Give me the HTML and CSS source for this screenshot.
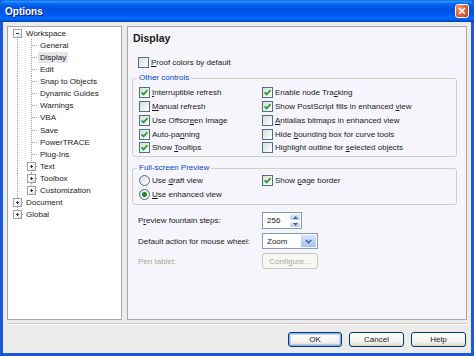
FILE: index.html
```html
<!DOCTYPE html>
<html>
  <head>
    <title>Options</title>
    <link rel="stylesheet" href="styles.css">
  </head>
  <body>
    <div class="window">
      <div class="titlebar">
        <span class="title">Options</span>
        <span class="close">
          <svg width="8" height="8" viewBox="0 0 8 8"><path d="M1 1L7 7M7 1L1 7" stroke="#fff" stroke-width="1.6"/></svg>
        </span>
      </div>

      <div class="client">
        <div class="panes">
          <!-- category tree -->
          <div class="tree">
            <div class="node"><span class="g down"><span class="box"></span></span><span class="label">Workspace</span></div>
            <div class="node"><span class="g v"></span><span class="g tee"></span><span class="label">General</span></div>
            <div class="node"><span class="g v"></span><span class="g tee"></span><span class="label sel">Display</span></div>
            <div class="node"><span class="g v"></span><span class="g tee"></span><span class="label">Edit</span></div>
            <div class="node"><span class="g v"></span><span class="g tee"></span><span class="label">Snap to Objects</span></div>
            <div class="node"><span class="g v"></span><span class="g tee"></span><span class="label">Dynamic Guides</span></div>
            <div class="node"><span class="g v"></span><span class="g tee"></span><span class="label">Warnings</span></div>
            <div class="node"><span class="g v"></span><span class="g tee"></span><span class="label">VBA</span></div>
            <div class="node"><span class="g v"></span><span class="g tee"></span><span class="label">Save</span></div>
            <div class="node"><span class="g v"></span><span class="g tee"></span><span class="label">PowerTRACE</span></div>
            <div class="node"><span class="g v"></span><span class="g tee"></span><span class="label">Plug-Ins</span></div>
            <div class="node"><span class="g v"></span><span class="g tee"><span class="box plus"></span></span><span class="label">Text</span></div>
            <div class="node"><span class="g v"></span><span class="g tee"><span class="box plus"></span></span><span class="label">Toolbox</span></div>
            <div class="node"><span class="g v"></span><span class="g ell"><span class="box plus"></span></span><span class="label">Customization</span></div>
            <div class="node"><span class="g tee"><span class="box plus"></span></span><span class="label">Document</span></div>
            <div class="node"><span class="g ell"><span class="box plus"></span></span><span class="label">Global</span></div>
          </div>

          <!-- settings page -->
          <div class="page">
            <div class="heading">Display</div>

            <div class="check proof"><span class="cb"></span><span><u>P</u>roof colors by default</span></div>

            <fieldset class="group">
              <legend>Other controls</legend>
              <div class="opts">
                <div class="check"><span class="cb on"></span><span><u>I</u>nterruptible refresh</span></div>
                <div class="check"><span class="cb"></span><span><u>M</u>anual refresh</span></div>
                <div class="check"><span class="cb on"></span><span>Use Offscr<u>e</u>en Image</span></div>
                <div class="check"><span class="cb on"></span><span>Auto-pa<u>n</u>ning</span></div>
                <div class="check"><span class="cb on"></span><span>Show <u>T</u>ooltips</span></div>
                <div class="check"><span class="cb on"></span><span>Enable node Tra<u>c</u>king</span></div>
                <div class="check"><span class="cb on"></span><span>Show PostScript fills in enhanced <u>v</u>iew</span></div>
                <div class="check"><span class="cb"></span><span><u>A</u>ntialias bitmaps in enhanced view</span></div>
                <div class="check"><span class="cb"></span><span>Hide <u>b</u>ounding box for curve tools</span></div>
                <div class="check"><span class="cb"></span><span>Highlight outline for <u>s</u>elected objects</span></div>
              </div>
            </fieldset>

            <fieldset class="group preview">
              <legend>Full-screen Preview</legend>
              <div class="opts two">
                <div class="check"><span class="rb"></span><span>Use <u>d</u>raft view</span></div>
                <div class="check"><span class="cb on"></span><span>Show <u>p</u>age border</span></div>
                <div class="check"><span class="rb on"></span><span><u>U</u>se enhanced view</span></div>
              </div>
            </fieldset>

            <div class="field first">
              <span class="flabel">P<u>r</u>eview fountain steps:</span>
              <div class="spin">
                <span class="val">256</span>
                <span class="arrows">
                  <span class="arr"><svg width="5" height="3" viewBox="0 0 5 3"><path d="M0 3L2.5 0L5 3Z" fill="#4d6185"/></svg></span>
                  <span class="arr"><svg width="5" height="3" viewBox="0 0 5 3"><path d="M0 0L2.5 3L5 0Z" fill="#4d6185"/></svg></span>
                </span>
              </div>
            </div>

            <div class="field">
              <span class="flabel">Default action for mouse wheel:</span>
              <div class="combo">
                <span class="val">Zoom</span>
                <span class="drop"><svg width="7" height="5" viewBox="0 0 7 5"><path d="M0.8 1L3.5 3.7L6.2 1" stroke="#4d6185" stroke-width="1.6" fill="none"/></svg></span>
              </div>
            </div>

            <div class="field disabled">
              <span class="flabel">Pen tablet:</span>
              <span class="btn small">Confi<u>g</u>ure...</span>
            </div>
          </div>
        </div>

        <div class="sep"></div>

        <div class="buttons">
          <span class="btn default">OK</span>
          <span class="btn">Cancel</span>
          <span class="btn">Help</span>
        </div>
      </div>
    </div>
  </body>
</html>
```

FILE: styles.css
```css
body {
  margin: 0;
  font-family: "Liberation Sans", Arial, sans-serif;
  font-size: 8px;
  color: #1a1a1a;
}

.window {
  width: 474px;
  height: 356px;
  display: flex;
  flex-direction: column;
  background: #1a58d8;
}

/* title bar */

.titlebar {
  height: 22px;
  flex: none;
  display: flex;
  align-items: center;
  padding: 0 5px 0 5px;
  background: linear-gradient(to bottom, #0058ee 0%, #3593ff 5%, #288eff 8%, #127dff 12%, #036ffc 16%, #0262ee 22%, #0057e5 30%, #0054e3 40%, #0055eb 60%, #005bf5 70%, #026afe 80%, #0062ef 88%, #0052d6 94%, #0040ab 100%);
  border-radius: 6px 6px 0 0;
}

.title {
  color: #fff;
  font-weight: bold;
  font-size: 10px;
  text-shadow: 1px 1px 0 #0a1e80;
}

.close {
  margin-left: auto;
  width: 14px;
  height: 14px;
  box-sizing: border-box;
  border: 1px solid #fff;
  border-radius: 3px;
  background: radial-gradient(circle at 30% 30%, #f0a080, #e25a2c 55%, #c23a12);
  display: flex;
  align-items: center;
  justify-content: center;
}

/* dialog body */

.client {
  flex: 1;
  margin: 0 3px 3px 3px;
  background: #ecebe9;
  padding: 4px 4px 0 4px;
  display: flex;
  flex-direction: column;
}

.panes {
  height: 294px;
  display: flex;
  gap: 5px;
}

/* tree */

.tree {
  width: 115px;
  box-sizing: border-box;
  background: #fff;
  border: 1px solid #a7a6aa;
  padding-left: 2px;
}

.node {
  height: 12.13px;
  display: flex;
  align-items: center;
}

.g {
  width: 14px;
  height: 100%;
  flex: none;
  display: flex;
  align-items: center;
  padding-left: 3px;
  box-sizing: border-box;
  background-repeat: no-repeat;
}

.g.v {
  background-image: repeating-linear-gradient(to bottom, #a0a0a0 0 1px, transparent 1px 2px);
  background-position: 7px 0;
  background-size: 1px 100%;
}

.g.tee {
  background-image: repeating-linear-gradient(to bottom, #a0a0a0 0 1px, transparent 1px 2px),
    repeating-linear-gradient(to right, #a0a0a0 0 1px, transparent 1px 2px);
  background-position: 7px 0, 8px 50%;
  background-size: 1px 100%, 6px 1px;
}

.g.ell {
  background-image: repeating-linear-gradient(to bottom, #a0a0a0 0 1px, transparent 1px 2px),
    repeating-linear-gradient(to right, #a0a0a0 0 1px, transparent 1px 2px);
  background-position: 7px 0, 8px 50%;
  background-size: 1px 50%, 6px 1px;
}

.g.down {
  background-image: repeating-linear-gradient(to bottom, #a0a0a0 0 1px, transparent 1px 2px);
  background-position: 7px 100%;
  background-size: 1px 50%;
}

.box {
  width: 9px;
  height: 9px;
  box-sizing: border-box;
  border: 1px solid #93a4b6;
  background: linear-gradient(#333, #333) 2px 3px / 3px 1px no-repeat,
    linear-gradient(135deg, #fff 40%, #d8d8d0);
}

.box.plus {
  background: linear-gradient(#333, #333) 2px 3px / 3px 1px no-repeat,
    linear-gradient(#333, #333) 3px 2px / 1px 3px no-repeat,
    linear-gradient(135deg, #fff 40%, #d8d8d0);
}

.label {
  padding: 1px 2px;
  white-space: nowrap;
}

.label.sel {
  background: #e6e6ea;
}

/* page */

.page {
  flex: 1;
  background: #f5f5fb;
  border: 1px solid #a7a6aa;
  padding: 4px 9px 0 4px;
}

.heading {
  font-weight: bold;
  font-size: 10.5px;
  line-height: 14px;
  margin-left: 1px;
}

.check {
  display: flex;
  align-items: center;
  gap: 2px;
  white-space: nowrap;
}

.proof {
  height: 13px;
  margin: 10.5px 0 0 6px;
}

.cb {
  width: 11px;
  height: 11px;
  flex: none;
  box-sizing: border-box;
  border: 1px solid #4a6e96;
  background: linear-gradient(135deg, #dcdcd7, #fff);
}

.cb.on {
  background: url("data:image/svg+xml,%3Csvg xmlns='http://www.w3.org/2000/svg' viewBox='0 0 9 9'%3E%3Cpath d='M1.6 4.3L3.6 6.4L7.5 2.2' stroke='%2321a121' stroke-width='1.7' fill='none'/%3E%3C/svg%3E") center / 9px 9px no-repeat,
    linear-gradient(135deg, #dcdcd7, #fff);
}

.rb {
  width: 11px;
  height: 11px;
  flex: none;
  box-sizing: border-box;
  border: 1px solid #4a6e96;
  border-radius: 50%;
  background: linear-gradient(135deg, #dcdcd7, #fff);
}

.rb.on {
  background: radial-gradient(circle, #2b8a2b 0 2.2px, transparent 2.8px),
    linear-gradient(135deg, #dcdcd7, #fff);
}

.group {
  margin: 4.5px 0 0 0;
  padding: 3px 6px 1.5px 6px;
  border: 1px solid #d0d0bf;
  border-radius: 3px;
}

.group legend {
  color: #0046d5;
  line-height: 10px;
  padding: 0 2px;
  margin-left: -2px;
}

.opts {
  display: grid;
  grid-template-columns: 123px 1fr;
  grid-template-rows: repeat(5, 13.75px);
  grid-auto-flow: column;
}

.preview {
  margin-top: 6px;
  padding: 0 6px 3px 6px;
}

.opts.two {
  grid-template-rows: repeat(2, 14px);
  grid-auto-flow: row;
}

/* fields */

.field {
  display: flex;
  align-items: center;
  margin: 4px 0 0 6px;
}

.field.first {
  margin-top: 7px;
}

.flabel {
  width: 124px;
  flex: none;
}

.disabled .flabel {
  color: #aca899;
}

.spin {
  width: 40px;
  height: 17px;
  box-sizing: border-box;
  border: 1px solid #7f9db9;
  background: #fff;
  display: flex;
}

.val {
  flex: 1;
  display: flex;
  align-items: center;
  padding-left: 4px;
}

.arrows {
  width: 12px;
  display: flex;
  flex-direction: column;
}

.arr {
  flex: 1;
  display: flex;
  align-items: center;
  justify-content: center;
  border: 1px solid #fff;
  border-radius: 2px;
  background: linear-gradient(#e3ebfe, #b9cbf4);
}

.combo {
  width: 56px;
  height: 16px;
  box-sizing: border-box;
  border: 1px solid #7f9db9;
  background: #fff;
  display: flex;
}

.drop {
  width: 15px;
  display: flex;
  align-items: center;
  justify-content: center;
  border: 1px solid #fff;
  border-radius: 2px;
  background: linear-gradient(#d8e4fd, #a7c1f5);
}

/* buttons */

.sep {
  margin-top: 3px;
  height: 1px;
  background: #c9c7c5;
  border-bottom: 1px solid #fff;
}

.buttons {
  display: flex;
  justify-content: flex-end;
  gap: 7px;
  margin-top: 7px;
  padding-right: 1px;
}

.btn {
  width: 55px;
  height: 15px;
  box-sizing: border-box;
  display: flex;
  align-items: center;
  justify-content: center;
  border: 1px solid #003c74;
  border-radius: 3px;
  background: linear-gradient(#fff, #f3f2ee 70%, #d8d4cc);
}

.btn.default {
  width: 54px;
  box-shadow: inset 0 0 0 1.5px #8fb0ea;
}

.btn.small {
  width: 56px;
  height: 16px;
  color: #aca899;
  border-color: #c9c7ba;
  background: #f7f7f4;
}
```
